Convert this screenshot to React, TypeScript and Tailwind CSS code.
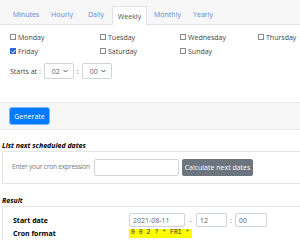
import React from 'react';

const tabs = [
  { label: 'Minutes', w: 'w-[36px]' },
  { label: 'Hourly', w: 'w-[36px]' },
  { label: 'Daily', w: 'w-[32px]' },
  { label: 'Weekly', w: 'w-[35px]', active: true },
  { label: 'Monthly', w: 'w-[41px]' },
  { label: 'Yearly', w: 'w-[30px]' },
];

const days = [
  { label: 'Monday' },
  { label: 'Tuesday' },
  { label: 'Wednesday' },
  { label: 'Thursday' },
  { label: 'Friday', checked: true },
  { label: 'Saturday' },
  { label: 'Sunday' },
];

const Check = ({ checked }: { checked?: boolean }) =>
  checked ? (
    <span className="w-[6px] h-[6px] bg-[#2a6ad8] flex items-center justify-center">
      <svg width="5" height="5" viewBox="0 0 8 8">
        <path d="M1 4.2 L3.2 6.2 L7 1.8" stroke="white" strokeWidth="1.6" fill="none" />
      </svg>
    </span>
  ) : (
    <span className="w-[6px] h-[6px] border border-[#8a8a8a] bg-white" />
  );

const Select = ({ value }: { value: string }) => (
  <div className="w-[30px] h-[16px] border border-[#ced4da] rounded-[2px] flex items-center justify-between pl-[7px] pr-[5px] text-[#666]">
    <span>{value}</span>
    <svg width="5" height="4" viewBox="0 0 10 8">
      <path d="M1 2 L5 6 L9 2" stroke="#444" strokeWidth="1.8" fill="none" />
    </svg>
  </div>
);

export default function App() {
  return (
    <div className="w-[300px] h-[240px] overflow-hidden bg-white text-[7px] leading-none text-[#444] font-['Open_Sans',sans-serif]">
      {/* Generator card */}
      <div>
        <div className="h-[25px] bg-[#f7f7f7] border-b border-[#dee2e6] flex items-end pl-[8px]">
          {tabs.map((t) =>
            t.active ? (
              <div
                key={t.label}
                className={`${t.w} h-[19px] -mb-px bg-white border border-b-0 border-[#dee2e6] rounded-t-[2px] flex items-center justify-center text-[#495057]`}
              >
                {t.label}
              </div>
            ) : (
              <div key={t.label} className={`${t.w} h-[19px] flex items-center justify-center text-[#5a86d6]`}>
                {t.label}
              </div>
            )
          )}
        </div>

        <div className="h-[77px] px-[10px] pt-[9px]">
          <div className="grid grid-cols-[90px_80px_78px_1fr] gap-y-[8px]">
            {days.map((d) => (
              <div key={d.label} className="flex items-center gap-[2px] h-[6px]">
                <Check checked={d.checked} />
                <span>{d.label}</span>
              </div>
            ))}
          </div>
          <div className="flex items-center gap-[2px] mt-[9px]">
            <span className="mr-[1px]">Starts at :</span>
            <Select value="02" />
            <span className="px-[1px]">:</span>
            <Select value="00" />
          </div>
        </div>

        <div className="h-[28px] bg-[#f7f7f7] border-y border-[#e9ecef] px-[10px] flex items-center">
          <button className="w-[39px] h-[16px] bg-[#007bff] text-white rounded-[2px] ring-1 ring-[#7fb5ff]">
            Generate
          </button>
        </div>
      </div>

      {/* Next dates */}
      <div className="pl-[2px] mt-[12px] font-bold italic text-black">List next scheduled dates</div>
      <div className="ml-[2px] mt-[2px] h-[33px] border border-r-0 border-[#e6e6e6] flex items-center pl-[9px]">
        <span className="text-[#777] w-[82px] whitespace-nowrap text-[6.5px] tracking-[-0.15px]">Enter your cron expression</span>
        <div className="w-[85px] h-[17px] border border-[#ced4da] rounded-[2px] bg-white" />
        <button className="ml-[3px] w-[71px] h-[17px] bg-[#6c757d] text-white rounded-[2px] whitespace-nowrap">
          Calculate next dates
        </button>
      </div>

      {/* Result */}
      <div className="pl-[2px] mt-[13px] font-bold italic text-black">Result</div>
      <div className="ml-[2px] mt-[2px] border border-r-0 border-[#e6e6e6] pl-[10px] pt-[6px] pb-[6px]">
        <div className="flex items-center">
          <span className="w-[116px] font-bold text-black">Start date</span>
          <div className="w-[56px] h-[14px] border border-[#ced4da] rounded-[2px] flex items-center pl-[3px] text-[#666]">
            2021-08-11
          </div>
          <span className="w-[11px] text-center text-[#666]">-</span>
          <div className="w-[31px] h-[14px] border border-[#ced4da] rounded-[2px] flex items-center pl-[3px] text-[#666]">
            12
          </div>
          <span className="w-[8px] text-center text-[#666]">:</span>
          <div className="w-[32px] h-[14px] border border-[#ced4da] rounded-[2px] flex items-center pl-[3px] text-[#666]">
            00
          </div>
        </div>
        <div className="flex items-center mt-[2px]">
          <span className="w-[116px] font-bold text-black">Cron format</span>
          <span className="bg-[#ffff00] px-[2px] py-[1px] font-['Liberation_Mono',monospace] text-[6.5px] text-[#333] whitespace-pre">
            0 0 2 ? * FRI *
          </span>
        </div>
      </div>
    </div>
  );
}
